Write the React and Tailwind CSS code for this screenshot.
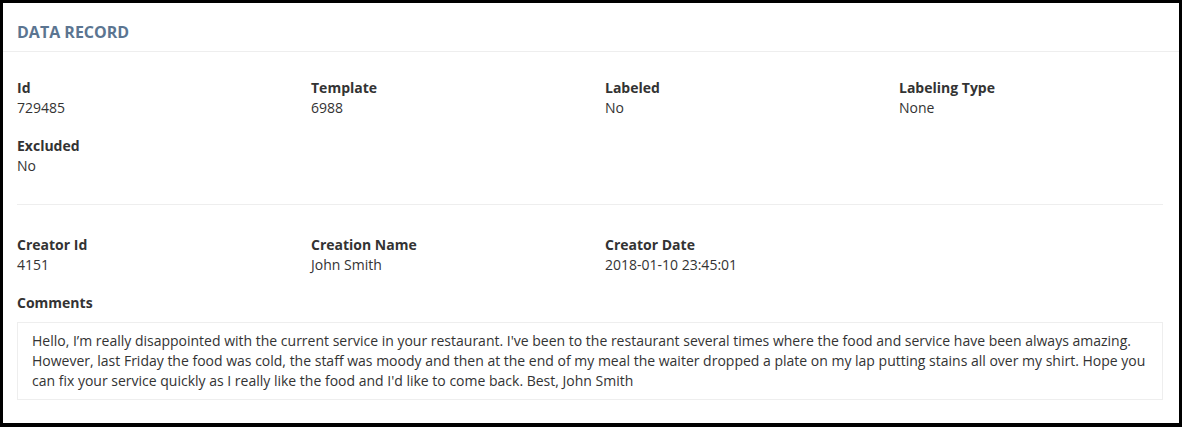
const fields = [
  { label: "Id", value: "729485" },
  { label: "Template", value: "6988" },
  { label: "Labeled", value: "No" },
  { label: "Labeling Type", value: "None" },
  { label: "Excluded", value: "No" },
];

const creator = [
  { label: "Creator Id", value: "4151" },
  { label: "Creation Name", value: "John Smith" },
  { label: "Creator Date", value: "2018-01-10 23:45:01" },
];

const comment =
  "Hello, I’m really disappointed with the current service in your restaurant. I've been to the restaurant several times where the food and service have been always amazing. However, last Friday the food was cold, the staff was moody and then at the end of my meal the waiter dropped a plate on my lap putting stains all over my shirt. Hope you can fix your service quickly as I really like the food and I'd like to come back. Best, John Smith";

function Field({ label, value }) {
  return (
    <div>
      <div className="font-bold leading-[20px]">{label}</div>
      <div className="leading-[19px]">{value}</div>
    </div>
  );
}

export default function App() {
  return (
    <div className="h-[427px] w-[1182px] bg-black pt-[3px] pl-[3px] pr-[3px] pb-[4px]">
      <div
        className="h-full bg-white text-[14px] text-[#333]"
        style={{ fontFamily: '"Open Sans", "Liberation Sans", sans-serif' }}
      >
        {/* header */}
        <div className="border-b border-[#eeeeee] pt-[17px] pb-[7px] pl-[14px]">
          <h2 className="text-[16px] font-bold uppercase leading-[24px] text-[#5b7591]">
            Data Record
          </h2>
        </div>

        <div className="pl-[14px] pr-[16px] pt-[26px]">
          <div className="grid grid-cols-[294px_294px_294px_294px] gap-y-[19px]">
            {fields.map((f) => (
              <Field key={f.label} {...f} />
            ))}
          </div>

          <div className="mt-[29px] border-t border-[#eeeeee]" />

          <div className="mt-[30px] grid grid-cols-[294px_294px_294px_294px]">
            {creator.map((f) => (
              <Field key={f.label} {...f} />
            ))}
          </div>

          <div className="mt-[19px] font-bold leading-[20px]">Comments</div>
          <div className="mt-[9px] border border-[#eeeeee] px-[14px] py-[8px] leading-[20px]">
            {comment}
          </div>
        </div>
      </div>
    </div>
  );
}
